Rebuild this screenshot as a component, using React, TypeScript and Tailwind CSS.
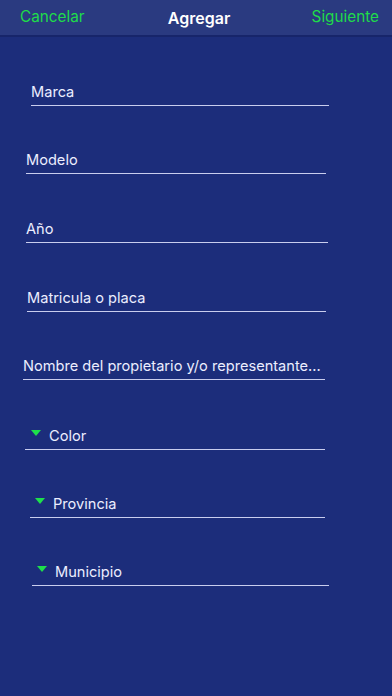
import React from "react";

type Field = {
  label: string;
  ml: string;
  w: string;
  mt: string;
  dropdown?: boolean;
  arrowMl?: string;
};

const fields: Field[] = [
  { label: "Marca", ml: "ml-[31px]", w: "w-[298px]", mt: "mt-[45px]" },
  { label: "Modelo", ml: "ml-[26px]", w: "w-[300px]", mt: "mt-[44px]" },
  { label: "Año", ml: "ml-[26px]", w: "w-[302px]", mt: "mt-[45px]" },
  { label: "Matricula o placa", ml: "ml-[27px]", w: "w-[299px]", mt: "mt-[45px]" },
  { label: "Nombre del propietario y/o representante...", ml: "ml-[23px]", w: "w-[302px]", mt: "mt-[44px]" },
  { label: "Color", ml: "ml-[25px]", w: "w-[300px]", mt: "mt-[46px]", dropdown: true, arrowMl: "ml-[6px]" },
  { label: "Provincia", ml: "ml-[30px]", w: "w-[295px]", mt: "mt-[44px]", dropdown: true, arrowMl: "ml-[5px]" },
  { label: "Municipio", ml: "ml-[32px]", w: "w-[297px]", mt: "mt-[44px]", dropdown: true, arrowMl: "ml-[5px]" },
];

function Arrow({ className }: { className?: string }) {
  return (
    <svg className={className} width="10" height="6" viewBox="0 0 10 6">
      <path d="M0 0h10L5 6z" fill="#1ee04b" />
    </svg>
  );
}

export default function App() {
  return (
    <div
      className="w-[392px] h-[696px] bg-[#1c2d7b] overflow-hidden"
      style={{ fontFamily: "Inter, 'Liberation Sans', sans-serif" }}
    >
      {/* Navigation bar */}
      <div className="h-[37px] bg-[#2a3a80] border-b-2 border-[#17256a] flex items-center justify-between pl-[20px] pr-[13px]">
        <button className="text-[15.3px] text-[#1fdc4a]">Cancelar</button>
        <span className="text-[16px] font-semibold text-white ml-[2px]">Agregar</span>
        <button className="text-[15.3px] text-[#1fdc4a]">Siguiente</button>
      </div>

      {/* Form fields */}
      <div className="flex flex-col">
        {fields.map((f) => (
          <div
            key={f.label}
            className={`${f.mt} ${f.ml} ${f.w} border-b-[1.5px] border-[#c9cdee] h-[24px] flex items-start`}
          >
            {f.dropdown && <Arrow className={`${f.arrowMl} mt-[4px] mr-[8px] shrink-0`} />}
            <span className="text-[14.6px] leading-[20px] text-[#eceeff] whitespace-nowrap">{f.label}</span>
          </div>
        ))}
      </div>
    </div>
  );
}
